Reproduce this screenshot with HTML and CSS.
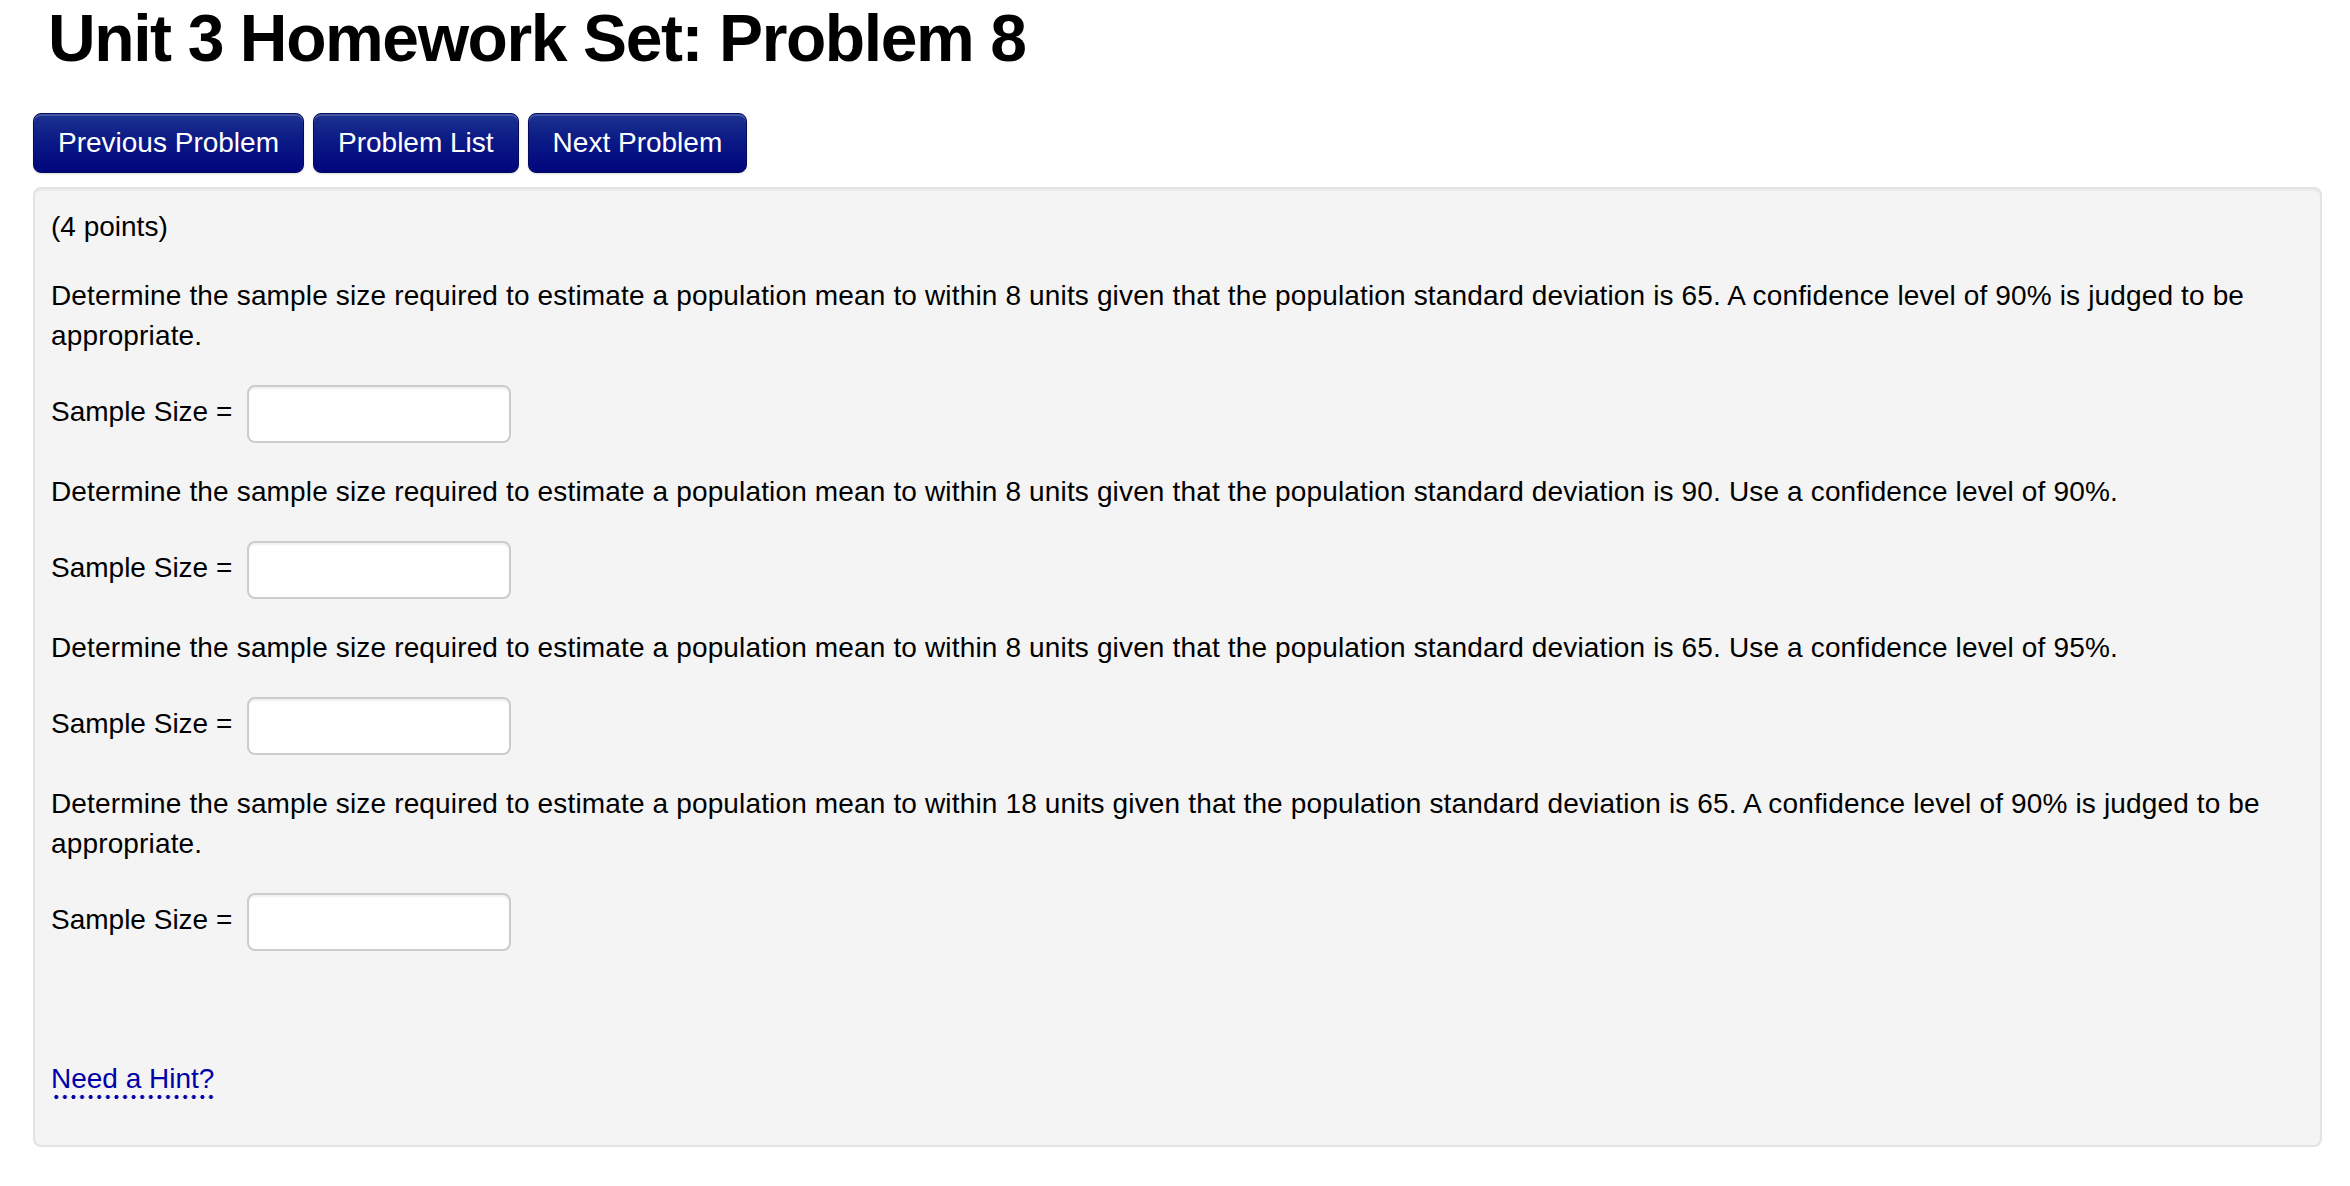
FILE: index.html
```html
<!DOCTYPE html>
<html lang="en">
<head>
<meta charset="utf-8">
<title>Unit 3 Homework Set: Problem 8</title>
<link rel="stylesheet" href="styles.css">
</head>
<body>
  <h1 class="page-title">Unit 3 Homework Set: Problem 8</h1>
  <nav class="problem-nav">
    <a class="nav-btn" href="#">Previous Problem</a>
    <a class="nav-btn" href="#">Problem List</a>
    <a class="nav-btn" href="#">Next Problem</a>
  </nav>
  <div class="problem-box">
    <div class="problem-body">
      <div class="line">(4 points)</div>
      <p class="question">Determine the sample size required to estimate a population mean to within 8 units given that the population standard deviation is 65. A confidence level of 90% is judged to be appropriate.</p>
      <div class="answer-row"><span class="answer-label">Sample Size =</span><input class="answer-input" type="text"></div>
      <p class="question">Determine the sample size required to estimate a population mean to within 8 units given that the population standard deviation is 90. Use a confidence level of 90%.</p>
      <div class="answer-row"><span class="answer-label">Sample Size =</span><input class="answer-input" type="text"></div>
      <p class="question">Determine the sample size required to estimate a population mean to within 8 units given that the population standard deviation is 65. Use a confidence level of 95%.</p>
      <div class="answer-row"><span class="answer-label">Sample Size =</span><input class="answer-input" type="text"></div>
      <p class="question">Determine the sample size required to estimate a population mean to within 18 units given that the population standard deviation is 65. A confidence level of 90% is judged to be appropriate.</p>
      <div class="answer-row"><span class="answer-label">Sample Size =</span><input class="answer-input" type="text"></div>
      <div class="hint-line"><a class="hint-link" href="#">Need a Hint?</a></div>
    </div>
  </div>
</body>
</html>
```

FILE: styles.css
```css
html, body {
  margin: 0;
  padding: 0;
  background: #ffffff;
}

body {
  padding: 0 28px 0 33px;
  font-family: "Liberation Sans", Arial, Helvetica, sans-serif;
  font-size: 28px;
  line-height: 40px;
  color: #000000;
}

.page-title {
  margin: 0;
  padding: 1px 0 0 15px;
  font-size: 66px;
  line-height: 74px;
  font-weight: bold;
  letter-spacing: -1.4px;
  color: #000000;
}

.problem-nav {
  display: flex;
  gap: 9px;
  margin-top: 38px;
}

.nav-btn {
  display: block;
  padding: 9px 24px;
  line-height: 40px;
  font-size: 28px;
  color: #ffffff;
  text-decoration: none;
  background: linear-gradient(to bottom, #1d3390 0%, #0b1a86 45%, #00057c 100%);
  border: 1px solid #050c5e;
  border-radius: 8px;
  box-shadow: inset 0 2px 0 rgba(255, 255, 255, 0.18), 0 1px 2px rgba(0, 0, 0, 0.15);
}

.problem-box {
  margin-top: 14px;
  padding: 18px 16px 19px;
  background: #f4f4f4;
  border: 2px solid #e3e3e3;
  border-radius: 8px;
  box-shadow: inset 0 2px 2px rgba(0, 0, 0, 0.04);
}

.problem-body {
  display: flex;
  flex-direction: column;
  gap: 29px;
}

.line,
.question {
  margin: 0;
}

.question {
  letter-spacing: 0.15px;
}

.answer-row {
  display: flex;
  align-items: flex-start;
  gap: 15px;
  height: 58px;
}

.answer-label {
  margin-top: 7px;
}

.answer-input {
  box-sizing: border-box;
  width: 264px;
  height: 58px;
  margin: 0;
  padding: 6px 12px;
  font-family: inherit;
  font-size: 28px;
  background: #ffffff;
  border: 2px solid #cccccc;
  border-radius: 8px;
  box-shadow: inset 0 2px 2px rgba(0, 0, 0, 0.06);
}

.hint-line {
  margin-top: 79px;
  margin-bottom: 27px;
}

.hint-link {
  display: inline-block;
  line-height: 40px;
  color: #0000a8;
  text-decoration: none;
  padding-bottom: 0;
  background-image: radial-gradient(circle at center, #0000a8 1.7px, rgba(0, 0, 168, 0) 2.3px);
  background-size: 8.6px 6px;
  background-repeat: repeat-x;
  background-position: 1px 35px;
}
```
